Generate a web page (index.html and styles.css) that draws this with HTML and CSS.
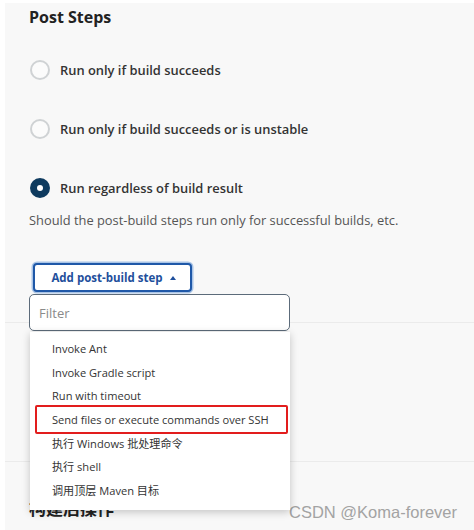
FILE: index.html
```html
<!DOCTYPE html>
<html lang="en">
<head>
<meta charset="utf-8">
<title>Post Steps</title>
<link rel="stylesheet" href="styles.css">
</head>
<body>
<div class="page">
  <section class="post-steps">
    <h2 class="title">Post Steps</h2>
    <div class="radios">
      <label class="radio"><span class="circle"></span><span class="radio-text">Run only if build succeeds</span></label>
      <label class="radio"><span class="circle"></span><span class="radio-text">Run only if build succeeds or is unstable</span></label>
      <label class="radio"><span class="circle checked"></span><span class="radio-text">Run regardless of build result</span></label>
    </div>
    <p class="desc">Should the post-build steps run only for successful builds, etc.</p>
    <div class="step-wrap">
      <button class="add-btn">Add post-build step <span class="caret"></span></button>
      <div class="dropdown">
        <div class="filter">Filter</div>
        <ul class="menu">
          <li>Invoke Ant</li>
          <li>Invoke Gradle script</li>
          <li>Run with timeout</li>
          <li class="marked">Send files or execute commands over SSH</li>
          <li>执行 Windows 批处理命令</li>
          <li>执行 shell</li>
          <li>调用顶层 Maven 目标</li>
        </ul>
      </div>
    </div>
  </section>
  <div class="rule rule-a"></div>
  <div class="rule rule-b"></div>
  <h2 class="title zh">构建后操作</h2>
</div>
<div class="watermark">CSDN @Koma-forever</div>
</body>
</html>
```

FILE: styles.css
```css
html, body {
  margin: 0;
  padding: 0;
  background: #ffffff;
}
body {
  width: 474px;
  height: 530px;
  overflow: hidden;
  position: relative;
  font-family: "Open Sans", "Noto Sans CJK SC", sans-serif;
  color: #333;
}
.page {
  margin: 3px 0 0 5px;
  height: 527px;
  background: #f8f8f8;
  padding-left: 24px;
  box-sizing: border-box;
  overflow: hidden;
}
.title {
  margin: 0;
  padding-top: 2px;
  font-size: 16px;
  line-height: 24px;
  font-weight: 700;
  color: #222;
}
.radios {
  display: flex;
  flex-direction: column;
  gap: 39px;
  margin-top: 31px;
}
.radio {
  display: flex;
  align-items: center;
  gap: 10px;
  height: 20px;
  font-size: 12.9px;
  font-weight: 600;
  color: #333;
  margin-left: 1px;
}
.circle {
  width: 20px;
  height: 20px;
  box-sizing: border-box;
  border: 2px solid #cfd2d4;
  border-radius: 50%;
  background: #fbfbfb;
  display: flex;
  align-items: center;
  justify-content: center;
}
.circle.checked {
  background: #0f3b5f;
  border-color: #0f3b5f;
}
.circle.checked::after {
  content: "";
  width: 6px;
  height: 6px;
  border-radius: 50%;
  background: #fff;
}
.desc {
  margin: 12px 0 0;
  font-size: 12.85px;
  line-height: 20px;
  color: #555;
}
.step-wrap {
  position: relative;
  margin-top: 33px;
  margin-left: 4px;
  width: 159px;
}
.add-btn {
  display: flex;
  align-items: center;
  justify-content: center;
  gap: 7px;
  width: 159px;
  height: 29px;
  box-sizing: border-box;
  background: #fff;
  border: 2px solid #1f58a8;
  border-radius: 4px;
  box-shadow: 0 0 0 1.5px #a9c4e6;
  font-family: "Open Sans", sans-serif;
  font-size: 11.5px;
  font-weight: 700;
  color: #1f4f9c;
  padding: 0 0 0 2px;
}
.caret {
  width: 0;
  height: 0;
  border-left: 3px solid transparent;
  border-right: 3px solid transparent;
  border-bottom: 4px solid #1f4f9c;
}
.dropdown {
  position: absolute;
  top: 31px;
  left: -4px;
  width: 261px;
  z-index: 2;
}
.filter {
  height: 37px;
  box-sizing: border-box;
  border: 1.5px solid #5c6b7a;
  border-radius: 5px;
  background: #fff;
  padding-left: 9px;
  display: flex;
  align-items: center;
  font-size: 13px;
  color: #8a8a8a;
}
.menu {
  list-style: none;
  margin: 1px 0 0 1px;
  padding: 5px 0 7px;
  width: 260px;
  background: #fff;
  box-shadow: 0 2px 8px rgba(0, 0, 0, 0.22);
}
.menu li {
  position: relative;
  padding-left: 22px;
  line-height: 23.67px;
  font-size: 11.1px;
  color: #333;
  white-space: nowrap;
}
.menu li.marked::after {
  content: "";
  position: absolute;
  top: -3px;
  bottom: -2px;
  left: 5px;
  right: 2px;
  border: 2px solid #e21d1d;
  border-radius: 2px;
}
.rule {
  height: 1px;
  background: #ebebeb;
  margin-left: -24px;
}
.rule-a {
  margin-top: 30px;
}
.rule-b {
  margin-top: 138px;
}
.zh {
  margin-top: 33px;
  font-size: 17px;
}
.watermark {
  position: absolute;
  left: 289px;
  top: 502px;
  font-family: "Liberation Sans", Arial, sans-serif;
  font-size: 16.5px;
  line-height: 20px;
  color: #a3a3a3;
  white-space: nowrap;
}
```
